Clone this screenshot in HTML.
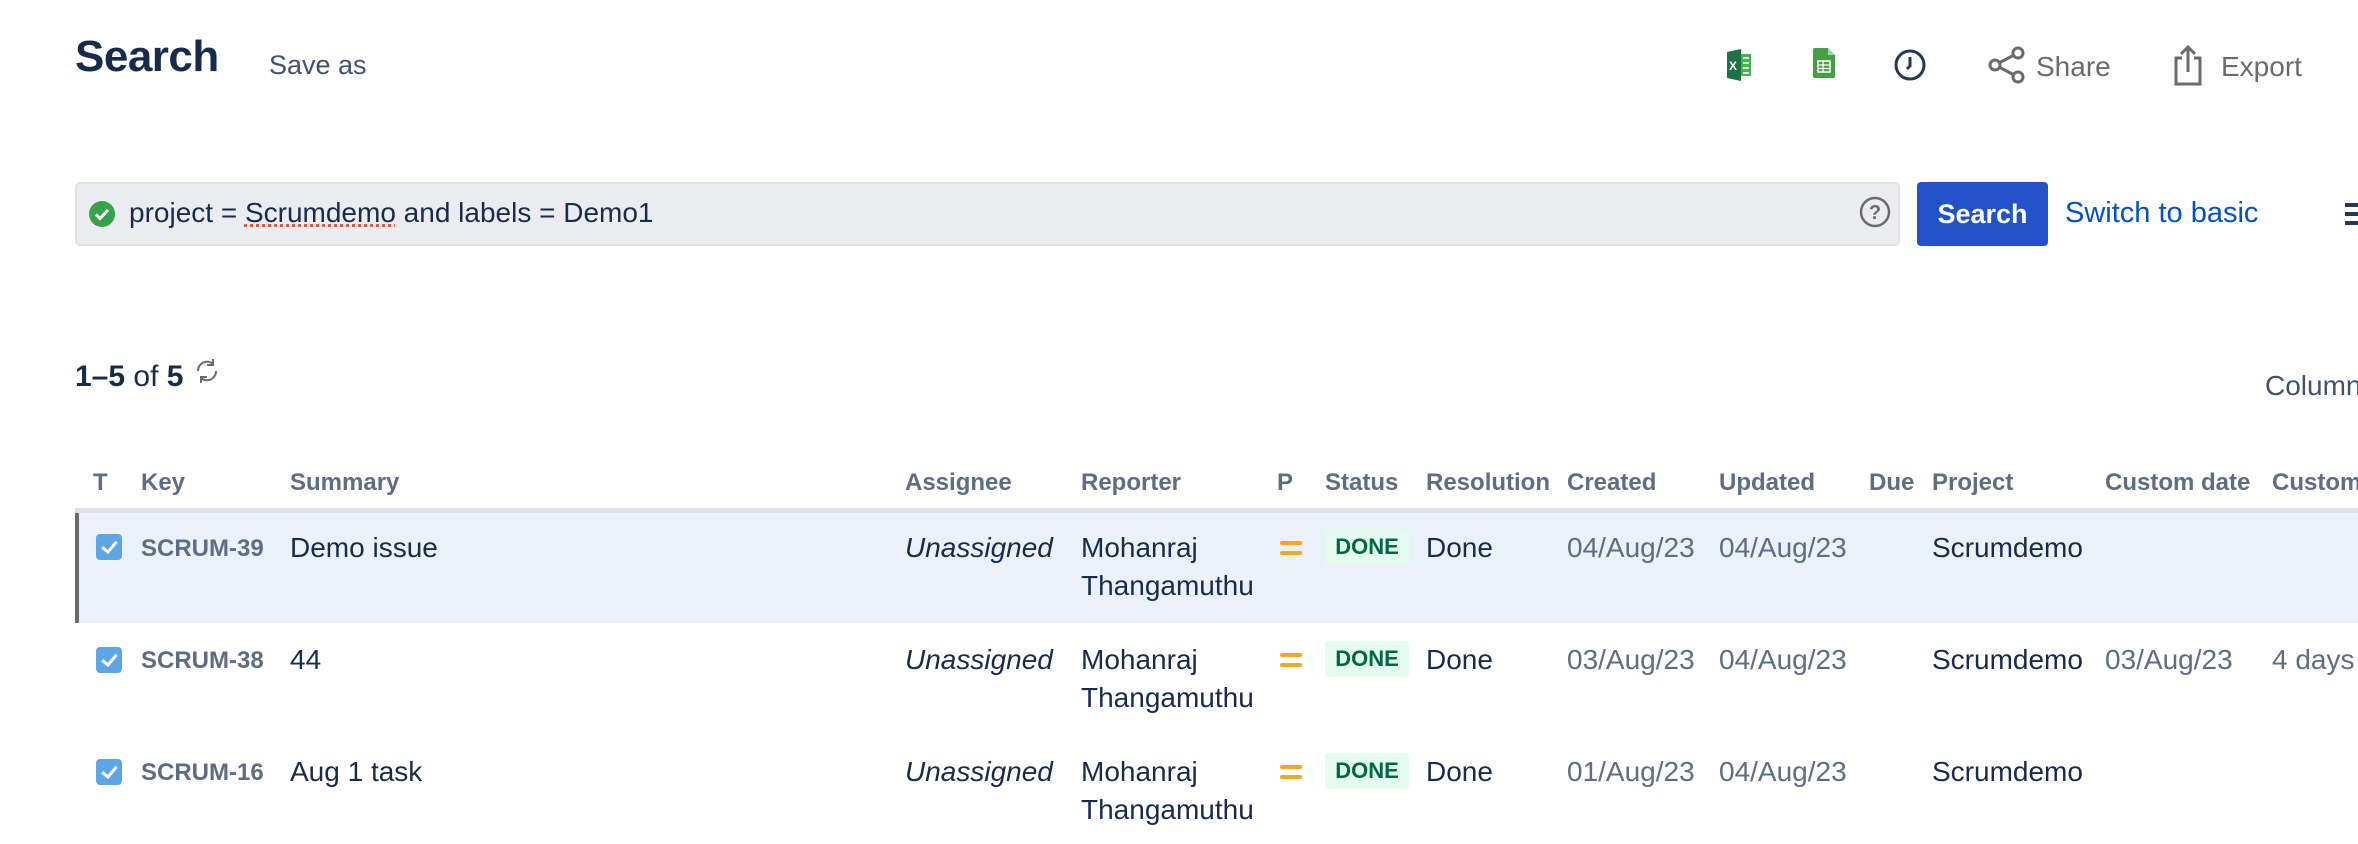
<!DOCTYPE html>
<html><head><meta charset="utf-8"><style>
*{margin:0;padding:0;box-sizing:border-box}
body{width:2358px;height:844px;overflow:hidden;background:#fff;font-family:"Liberation Sans",sans-serif;color:#172B4D;position:relative}
.a{position:absolute;white-space:nowrap}
.h{font-size:24px;font-weight:bold;color:#5E6C84;top:469px}
.t{font-size:28px;line-height:38px}
.k{font-size:24px;font-weight:bold;color:#5E6C84}
.g{color:#5E6C84}
.cb{position:absolute;left:96px;width:26px;height:26px;background:#5EA5E5;border-radius:4px}
.cb:after{content:"";position:absolute;left:9px;top:4px;width:6px;height:12px;border:solid #fff;border-width:0 3px 3px 0;transform:rotate(40deg)}
.pr{position:absolute;left:1280px;width:24px}
.pr:before,.pr:after{content:"";position:absolute;left:0;width:22px;height:4px;background:#F5A623;border-radius:2px}
.pr:before{top:0}.pr:after{top:10px}
.dn{position:absolute;left:1325px;width:84px;height:36px;background:#E3FCEF;border-radius:4px;color:#006644;font-weight:bold;font-size:22px;text-align:center;line-height:36px}
</style></head><body>
<div class="a" style="left:75px;top:32px;font-size:44px;font-weight:bold;letter-spacing:-0.5px">Search</div>
<div class="a" style="left:269px;top:50px;font-size:27px;color:#42526E">Save as</div>

<svg class="a" style="left:1727px;top:48px" width="26" height="34" viewBox="0 0 26 34"><path d="M0 4 L14 1 L14 33 L0 30Z" fill="#1E7145"/><rect x="14" y="6" width="10" height="22" fill="#4CAF50"/><text x="2" y="22" font-size="12" fill="#fff" font-family="Liberation Sans" font-weight="bold">X</text><path d="M16 10h6M16 15h6M16 20h6M16 25h6" stroke="#fff" stroke-width="1.5"/></svg>
<svg class="a" style="left:1813px;top:48px" width="22" height="30" viewBox="0 0 22 30"><path d="M0 2Q0 0 2 0H15L22 7V28Q22 30 20 30H2Q0 30 0 28Z" fill="#43A047"/><path d="M15 0V7H22" fill="#A5D6A7"/><rect x="5" y="13" width="12" height="11" fill="none" stroke="#fff" stroke-width="1.5"/><path d="M5 17h12M5 20.5h12M10 13v11" stroke="#fff" stroke-width="1.3"/></svg>
<svg class="a" style="left:1894px;top:48px" width="32" height="34" viewBox="0 0 32 34"><circle cx="16" cy="17" r="14" fill="none" stroke="#253858" stroke-width="3"/><path d="M16 9V18L13 21" fill="none" stroke="#253858" stroke-width="3"/></svg>
<svg class="a" style="left:1988px;top:46px" width="38" height="38" viewBox="0 0 38 38"><circle cx="30" cy="7" r="5" fill="none" stroke="#6B6B6B" stroke-width="3"/><circle cx="7" cy="19" r="5" fill="none" stroke="#6B6B6B" stroke-width="3"/><circle cx="30" cy="31" r="5" fill="none" stroke="#6B6B6B" stroke-width="3"/><path d="M11 17L26 9M11 21L26 29" stroke="#6B6B6B" stroke-width="3"/></svg>
<div class="a" style="left:2036px;top:51px;font-size:28px;color:#6B6B6B">Share</div>
<svg class="a" style="left:2172px;top:44px" width="32" height="42" viewBox="0 0 32 42"><path d="M10 14H4V40H28V14H22" fill="none" stroke="#6B6B6B" stroke-width="3"/><path d="M16 28V3M9 10L16 3L23 10" fill="none" stroke="#6B6B6B" stroke-width="3"/></svg>
<div class="a" style="left:2221px;top:51px;font-size:28px;color:#6B6B6B">Export</div>

<div class="a" style="left:75px;top:182px;width:1825px;height:64px;background:#EBECF0;border:2px solid #DFE1E6;border-radius:5px"></div>
<svg class="a" style="left:88px;top:200px" width="28" height="28" viewBox="0 0 28 28"><circle cx="14" cy="14" r="13" fill="#36A34B"/><path d="M8 14.5L12 18.5L20 10" fill="none" stroke="#fff" stroke-width="3"/></svg>
<div class="a" style="left:129px;top:197px;font-size:28px">project = <span style="text-decoration:underline dotted #E5493A">Scrumdemo</span> and labels = Demo1</div>
<svg class="a" style="left:1859px;top:196px" width="32" height="32" viewBox="0 0 32 32"><circle cx="16" cy="16" r="14" fill="none" stroke="#6B6B6B" stroke-width="2.5"/><text x="16" y="23" text-anchor="middle" font-size="20" fill="#6B6B6B" font-family="Liberation Sans" font-weight="bold">?</text></svg>
<div class="a" style="left:1917px;top:182px;width:131px;height:64px;background:#2251C8;border-radius:4px;color:#fff;font-size:27px;font-weight:bold;text-align:center;line-height:64px">Search</div>
<div class="a" style="left:2065px;top:197px;font-size:29px;color:#0052CC">Switch to basic</div>
<div class="a" style="left:2345px;top:203px;width:14px;height:4px;background:#253858;box-shadow:0 9px 0 #253858,0 18px 0 #253858"></div>

<div class="a" style="left:75px;top:360px;font-size:30px"><b>1–5</b> of <b>5</b></div>
<svg class="a" style="left:194px;top:358px" width="26" height="26" viewBox="0 0 26 26"><path d="M4 13A9 9 0 0 1 19 6M22 13A9 9 0 0 1 7 20" fill="none" stroke="#6B6B6B" stroke-width="2"/><path d="M19 1V7H13M7 25V19H13" fill="none" stroke="#6B6B6B" stroke-width="2"/></svg>
<div class="a" style="left:2265px;top:370px;font-size:28px;color:#42526E">Columns</div>

<div class="a h" style="left:93px">T</div>
<div class="a h" style="left:141px">Key</div>
<div class="a h" style="left:290px">Summary</div>
<div class="a h" style="left:905px">Assignee</div>
<div class="a h" style="left:1081px">Reporter</div>
<div class="a h" style="left:1277px">P</div>
<div class="a h" style="left:1325px">Status</div>
<div class="a h" style="left:1426px">Resolution</div>
<div class="a h" style="left:1567px">Created</div>
<div class="a h" style="left:1719px">Updated</div>
<div class="a h" style="left:1869px">Due</div>
<div class="a h" style="left:1932px">Project</div>
<div class="a h" style="left:2105px">Custom date</div>
<div class="a h" style="left:2272px">Custom</div>
<div class="a" style="left:75px;top:508px;width:2283px;height:5px;background:#DFE1E6"></div>
<div class="a" style="left:75px;top:513px;width:2283px;height:110px;background:#EBF1F9;border-left:4px solid #6B6B6B"></div>

<div class="cb" style="top:534px"></div>
<div class="a k" style="left:141px;top:535px">SCRUM-39</div>
<div class="a t" style="left:290px;top:529px">Demo issue</div>
<div class="a t" style="left:905px;top:529px;font-style:italic">Unassigned</div>
<div class="a t" style="left:1081px;top:529px">Mohanraj<br>Thangamuthu</div>
<div class="pr" style="top:541px"></div>
<div class="dn" style="top:529px">DONE</div>
<div class="a t" style="left:1426px;top:529px">Done</div>
<div class="a t g" style="left:1567px;top:529px">04/Aug/23</div>
<div class="a t g" style="left:1719px;top:529px">04/Aug/23</div>
<div class="a t" style="left:1932px;top:529px">Scrumdemo</div>

<div class="cb" style="top:647px"></div>
<div class="a k" style="left:141px;top:647px">SCRUM-38</div>
<div class="a t" style="left:290px;top:641px">44</div>
<div class="a t" style="left:905px;top:641px;font-style:italic">Unassigned</div>
<div class="a t" style="left:1081px;top:641px">Mohanraj<br>Thangamuthu</div>
<div class="pr" style="top:653px"></div>
<div class="dn" style="top:641px">DONE</div>
<div class="a t" style="left:1426px;top:641px">Done</div>
<div class="a t g" style="left:1567px;top:641px">03/Aug/23</div>
<div class="a t g" style="left:1719px;top:641px">04/Aug/23</div>
<div class="a t" style="left:1932px;top:641px">Scrumdemo</div>
<div class="a t g" style="left:2105px;top:641px">03/Aug/23</div>
<div class="a t g" style="left:2272px;top:641px">4 days</div>

<div class="cb" style="top:759px"></div>
<div class="a k" style="left:141px;top:759px">SCRUM-16</div>
<div class="a t" style="left:290px;top:753px">Aug 1 task</div>
<div class="a t" style="left:905px;top:753px;font-style:italic">Unassigned</div>
<div class="a t" style="left:1081px;top:753px">Mohanraj<br>Thangamuthu</div>
<div class="pr" style="top:765px"></div>
<div class="dn" style="top:753px">DONE</div>
<div class="a t" style="left:1426px;top:753px">Done</div>
<div class="a t g" style="left:1567px;top:753px">01/Aug/23</div>
<div class="a t g" style="left:1719px;top:753px">04/Aug/23</div>
<div class="a t" style="left:1932px;top:753px">Scrumdemo</div>
</body></html>
